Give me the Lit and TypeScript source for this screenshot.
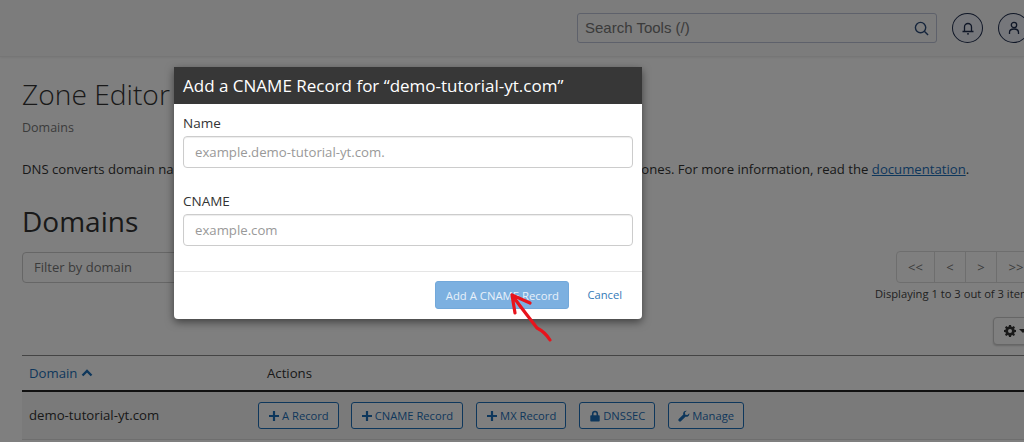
import { LitElement, html, css } from "lit";
import { customElement } from "lit/decorators.js";

const plus = html`<svg class="ic" viewBox="0 0 12 12"><path d="M4.900 1h2.200v3.900H11v2.200H7.100V11H4.900V7.100H1V4.900h3.900z" /></svg>`;
const lock = html`<svg class="ic" viewBox="0 0 12 12"><path d="M2 5.200h.9V3.800a3.100 3.100 0 0 1 6.200 0v1.400h.9c.4 0 .7.300.7.700v4.900c0 .4-.3.700-.7.700H2c-.4 0-.7-.3-.7-.7V5.900c0-.4.300-.7.700-.7zm2.500 0h3V3.800a1.500 1.500 0 0 0-3 0z" /></svg>`;
const wrench = html`<svg class="ic" viewBox="0 0 12 12"><path d="M11.300 3.200c.2 1.100-.1 2.100-.9 2.800-.8.800-1.900 1-2.900.7L2.900 11.300c-.5.500-1.300.5-1.800 0l-.4-.4c-.5-.5-.5-1.300 0-1.800l4.600-4.600c-.3-1-.1-2.100.7-2.900C6.800.800 7.800.500 8.800.700L6.900 2.600l.4 2.100 2.100.4z" /></svg>`;

@customElement("app-root")
export class AppRoot extends LitElement {
  static styles = css`
    :host { display: block; width: 1024px; height: 442px; overflow: hidden; position: relative; background: #fff; font-family: "Open Sans", sans-serif; color: #333; }
    .page { width: 1024px; height: 442px; overflow: hidden; display: flex; flex-direction: column; }
    .top { flex: none; height: 56px; box-sizing: content-box; border-bottom: 1px solid #ececec; background: #f8f8f8; display: flex; align-items: center; padding-left: 577px; gap: 15px; box-shadow: 0 1px 2px rgba(0,0,0,.06); }
    .search { flex: none; box-sizing: border-box; width: 360px; height: 30px; border: 1px solid #bcc3d6; border-radius: 3px; display: flex; align-items: center; justify-content: space-between; padding: 0 7px 0 7px; font: 15px/26px "Liberation Sans", sans-serif; color: #777; background: #f8f8f8; }
    .search span { padding-bottom: 1px; }
    .search svg { width: 15px; height: 15px; fill: none; stroke: #2b4a78; stroke-width: 1.500; }
    .round { flex: none; box-sizing: border-box; width: 31px; height: 30px; border-radius: 50%; border: 1px solid #1f2d4d; background: #eceef6; display: flex; align-items: center; justify-content: center; }
    .round svg { width: 14px; height: 14px; fill: none; stroke: #1f2d4d; stroke-width: 1.300; }
    .body { flex: 1; display: flex; flex-direction: column; padding: 0 0 0 22px; }
    h1 { margin: 18px 0 0; font-size: 28.200px; font-weight: 300; line-height: 38px; color: #333; }
    .crumb { margin-top: 6px; font-size: 12.500px; line-height: 17px; color: #777; }
    .intro { margin: 24px 0 0; font-size: 13.150px; line-height: 18px; white-space: nowrap; width: 949px; }
    .intro a, .sort { color: #1d6fb8; }
    .intro a { text-decoration: underline; }
    h2 { margin: 25px 0 0; font-size: 28px; font-weight: 400; line-height: 36px; color: #333; }
    .tools { display: flex; justify-content: space-between; margin-top: 13px; height: 62px; width: 1060px; }
    .filter { box-sizing: border-box; width: 300px; height: 31px; border: 1px solid #ccc; border-radius: 4px; padding: 0 11px; font-size: 13px; line-height: 29px; color: #777; background: #fff; }
    .pagewrap { width: 180px; margin-right: 27px; margin-top: -1px; display: flex; flex-direction: column; gap: 3px; }
    .pager { display: flex; width: 150px; height: 32px; box-sizing: border-box; border: 1px solid #ddd; border-radius: 4px; margin-left: 21px; color: #777; font-size: 13px; }
    .pager span { flex: none; display: flex; align-items: center; justify-content: center; border-right: 1px solid #ddd; box-sizing: border-box; width: 31px; }
    .pager span:first-child { width: 38px; }
    .pager span:last-child { border-right: 0; width: 38px; }
    .disp { font-size: 11.200px; line-height: 16px; white-space: nowrap; color: #444; }
    .gearrow { display: flex; justify-content: flex-end; width: 1002px; height: 38px; margin-top: 3px; }
    .gear { flex: none; box-sizing: border-box; width: 40px; height: 28px; margin-right: -9px; border: 1px solid #ccc; border-radius: 4px; background: #fff; box-shadow: 0 1px 2px rgba(0,0,0,.2); display: flex; align-items: center; gap: 3px; padding-left: 10px; }
    .gear svg { flex: none; width: 12px; height: 12px; fill: #333; }
    .caret { flex: none; width: 0; height: 0; border-left: 4px solid transparent; border-right: 4px solid transparent; border-top: 4px solid #333; }
    .thead { display: flex; align-items: center; box-sizing: border-box; width: 1002px; height: 37px; border-top: 1px solid #888; border-bottom: 2px solid #222; font-size: 13.200px; }
    .c1 { width: 245px; padding-left: 7px; flex: none; box-sizing: border-box; display: flex; align-items: center; gap: 4px; }
    .row .c1 { width: 236px; padding-bottom: 1px; }
    .sort svg { width: 12px; height: 12px; fill: none; stroke: currentColor; stroke-width: 2.400; }
    .row { display: flex; align-items: center; box-sizing: border-box; width: 1002px; height: 48px; background: #f5f5f5; border-bottom: 1px solid #ddd; font-size: 13.200px; }
    .btns { display: flex; gap: 13px; }
    .btn { box-sizing: border-box; height: 27px; display: inline-flex; align-items: center; gap: 2px; padding: 0 9px; border: 1px solid #1d6fb8; border-radius: 3px; background: #fff; color: #1d6fb8; font-size: 11.200px; white-space: nowrap; }
    .btn:first-child { margin-right: -1px; }
    .ic { width: 12px; height: 12px; fill: currentColor; flex: none; }
    .shade { position: absolute; inset: 0; background: rgba(0,0,0,.5); }
    .modal { position: absolute; left: 174px; top: 67px; width: 468px; height: 252px; background: #fff; border-radius: 0 0 4px 4px; box-shadow: 0 3px 9px rgba(0,0,0,.5); display: flex; flex-direction: column; overflow: hidden; }
    .mh { flex: none; height: 37px; background: #373737; color: #fff; font-size: 17px; font-weight: 500; line-height: 37px; padding-left: 9px; white-space: nowrap; }
    .mb { flex: 1; padding: 10px 9px 0 9px; display: flex; flex-direction: column; }
    label { font-size: 13.500px; font-weight: 500; line-height: 18px; color: #333; }
    .inp { box-sizing: border-box; height: 32px; margin-top: 4px; margin-bottom: 24px; border: 1px solid #ccc; border-radius: 4px; box-shadow: inset 0 1px 1px rgba(0,0,0,.075); padding: 0 11px; font-size: 13.200px; line-height: 30px; color: #999; }
    .mf { flex: none; height: 48px; box-sizing: border-box; border-top: 1px solid #e5e5e5; display: flex; align-items: flex-start; justify-content: flex-end; padding: 9px 20px 0 0; gap: 18px; }
    .primary { box-sizing: border-box; width: 134px; height: 28px; background: #7cb0e0; border: 1px solid #72a8da; border-radius: 3px; color: #e8f1fa; font-size: 11.300px; display: flex; align-items: center; justify-content: center; white-space: nowrap; }
    .cancel { font-size: 11.200px; line-height: 28px; color: #337ab7; }
    .arrow { position: absolute; left: 505px; top: 290px; width: 55px; height: 56px; fill: none; stroke: #e8141c; stroke-width: 3.200; stroke-linecap: round; stroke-linejoin: round; }
  `;

  render() {
    return html`
      <div class="page">
        <div class="top">
          <div class="search"><span>Search Tools (/)</span><svg viewBox="0 0 16 16"><circle cx="7" cy="7" r="5.500"/><path d="M11 11l4 4"/></svg></div>
          <div class="round"><svg viewBox="0 0 14 14"><path d="M3.500 10V6a3.500 3.500 0 0 1 7 0v4M1.500 10.500h11M6 12.800h2"/></svg></div>
          <div class="round"><svg viewBox="0 0 14 14"><circle cx="7" cy="4" r="2.700"/><path d="M2.500 13v-1.500c0-2 1.500-3.500 4.500-3.500s4.500 1.500 4.500 3.500V13"/></svg></div>
        </div>
        <div class="body">
          <h1>Zone Editor</h1>
          <div class="crumb">Domains</div>
          <div class="intro"><span>DNS converts domain names into computer-readable IP addresses. Use this feature to manage DNS zones. For more information, read the <a>documentation</a>.</span></div>
          <h2>Domains</h2>
          <div class="tools">
            <div class="filter">Filter by domain</div>
            <div class="pagewrap">
              <div class="pager"><span>&lt;&lt;</span><span>&lt;</span><span>&gt;</span><span>&gt;&gt;</span></div>
              <div class="disp">Displaying 1 to 3 out of 3 items</div>
            </div>
          </div>
          <div class="gearrow"><div class="gear"><svg viewBox="0 0 12 12"><path fill-rule="evenodd" d="M5 0h2l.3 1.600 1 .4L9.700 1.100 11 2.400l-.9 1.400.4 1L12 5v2l-1.500.3-.4 1 .9 1.400-1.300 1.300-1.400-.9-1 .4L7 12H5l-.3-1.500-1-.4-1.400.9L1 9.700l.9-1.400-.4-1L0 7V5l1.500-.3.4-1L1 2.400 2.300 1.100l1.400.9 1-.4zM6 4a2 2 0 1 0 0 4 2 2 0 0 0 0-4z"/></svg><span class="caret"></span></div></div>
          <div class="thead">
            <div class="c1 sort">Domain <svg viewBox="0 0 12 12"><path d="M1.500 8.500L6 4l4.500 4.500"/></svg></div>
            <div>Actions</div>
          </div>
          <div class="row">
            <div class="c1">demo-tutorial-yt.com</div>
            <div class="btns">
              <span class="btn">${plus}A Record</span>
              <span class="btn">${plus}CNAME Record</span>
              <span class="btn">${plus}MX Record</span>
              <span class="btn">${lock}DNSSEC</span>
              <span class="btn">${wrench}Manage</span>
            </div>
          </div>
        </div>
      </div>
      <div class="shade"></div>
      <div class="modal">
        <div class="mh">Add a CNAME Record for “demo-tutorial-yt.com”</div>
        <div class="mb">
          <label>Name</label>
          <div class="inp">example.demo-tutorial-yt.com.</div>
          <label>CNAME</label>
          <div class="inp">example.com</div>
        </div>
        <div class="mf">
          <div class="primary">Add A CNAME Record</div>
          <div class="cancel">Cancel</div>
        </div>
      </div>
      <svg class="arrow" viewBox="0 0 55 56"><path d="M7 5Q15 16 22 25T32 38Q40 42 45 50M7 5L10 23M7 5L25 13"/></svg>
    `;
  }
}
